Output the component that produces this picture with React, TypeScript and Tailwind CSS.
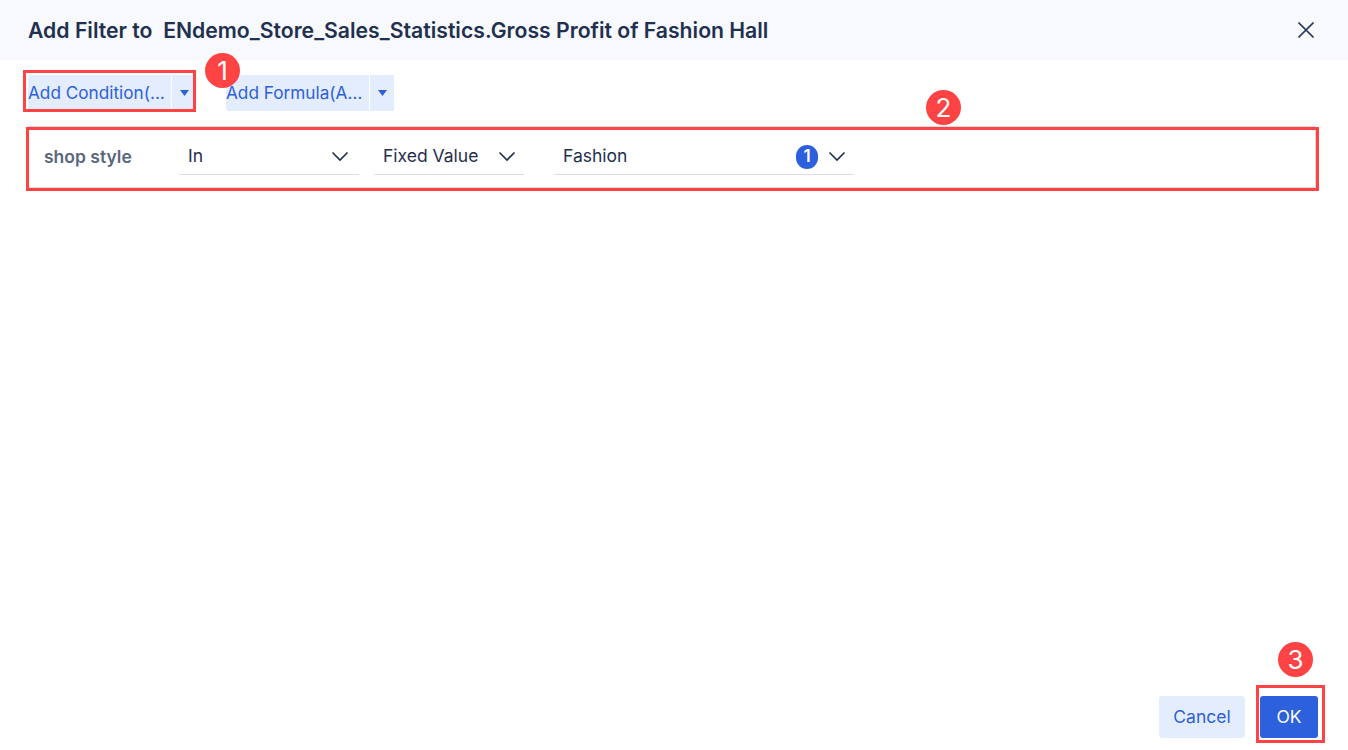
function Split({ label, className }: { label: string; className: string }) {
  return (
    <div className={`flex h-9 overflow-hidden rounded-l-[3px] text-[17.2px] text-[#2d60dc] ${className}`}>
      <div className="flex w-[143px] items-center bg-[#e4edfd]">
        <span className="whitespace-nowrap">{label}</span>
      </div>
      <div className="ml-px flex w-6 items-center justify-center bg-[#e4edfd]">
        <svg width="9" height="6" viewBox="0 0 9 6"><path d="M0 0h9L4.5 6z" fill="#2d60dc" /></svg>
      </div>
    </div>
  );
}

function Chevron() {
  return (
    <svg width="18" height="11" viewBox="0 0 18 11" fill="none" stroke="#1f2f4d" strokeWidth="1.6">
      <path d="M1.5 1.5 9 9l7.5-7.5" />
    </svg>
  );
}

function Badge({ n, className }: { n: number; className: string }) {
  return (
    <div className={`absolute flex h-[35px] w-[35px] items-center justify-center rounded-full bg-[#fd4343] text-[26px] text-white ${className}`}>
      {n}
    </div>
  );
}

export default function App() {
  return (
    <div className="relative flex h-[750px] w-[1348px] flex-col overflow-hidden bg-white text-[17.5px] font-['Inter',sans-serif] text-[#1f2f4d]">
      <header className="flex h-[60px] shrink-0 items-center justify-between bg-[#f8f9fd] pl-7 pr-[34px]">
        <h1 className="whitespace-pre pt-px text-[21.2px] font-semibold text-[#21304f]">Add Filter to  ENdemo_Store_Sales_Statistics.Gross Profit of Fashion Hall</h1>
        <svg width="16" height="16" viewBox="0 0 16 16" fill="none" stroke="#2c3c5a" strokeWidth="1.6">
          <path d="M.5.5l15 15M15.5.5l-15 15" />
        </svg>
      </header>

      <div className="flex pl-7 pt-[15px]">
        <Split label="Add Condition(…" className="" />
        <Split label="Add Formula(A…" className="ml-[30px]" />
      </div>

      <div className="ml-[27px] mt-[15px] flex h-[62px] w-[1289px] items-center border border-[#d9d9de] pl-[16px]">
        <span className="w-[135px] font-semibold text-[#5a667d]">shop style</span>
        <div className="flex h-[36px] w-[180px] items-center justify-between border-b border-[#dcdce4] pl-[9px] pr-[10px]">
          <span>In</span>
          <Chevron />
        </div>
        <div className="ml-[15px] flex h-[36px] w-[150px] items-center justify-between border-b border-[#dcdce4] pl-[9px] pr-[8px]">
          <span>Fixed Value</span>
          <Chevron />
        </div>
        <div className="ml-[30px] flex h-[36px] w-[300px] items-center justify-between border-b border-[#dcdce4] pl-[9px] pr-[8px]">
          <span>Fashion</span>
          <div className="flex items-center gap-[10px]">
            <span className="flex h-[24px] w-[22px] items-center justify-center rounded-full bg-[#2d60dc] text-[17px] font-semibold text-white">1</span>
            <Chevron />
          </div>
        </div>
      </div>

      <div className="mt-auto flex justify-end gap-[15px] pb-[12px] pr-[30px]">
        <button className="h-[42px] w-[86px] rounded-[3px] bg-[#e4edfd] text-[#2d60dc]">Cancel</button>
        <button className="h-[42px] w-[58px] rounded-[3px] bg-[#2d60dc] text-white">OK</button>
      </div>

      <div className="absolute left-[23px] top-[70px] h-[42px] w-[173px] border-[3px] border-[#fd4343]" />
      <div className="absolute left-[26px] top-[127px] h-[64px] w-[1293px] border-[3px] border-[#fd4343]" />
      <div className="absolute left-[1256px] top-[685px] h-[58px] w-[69px] border-[3px] border-[#fd4343]" />
      <Badge n={1} className="left-[205px] top-[53px]" />
      <Badge n={2} className="left-[926px] top-[90px]" />
      <Badge n={3} className="left-[1278px] top-[642px]" />
    </div>
  );
}
